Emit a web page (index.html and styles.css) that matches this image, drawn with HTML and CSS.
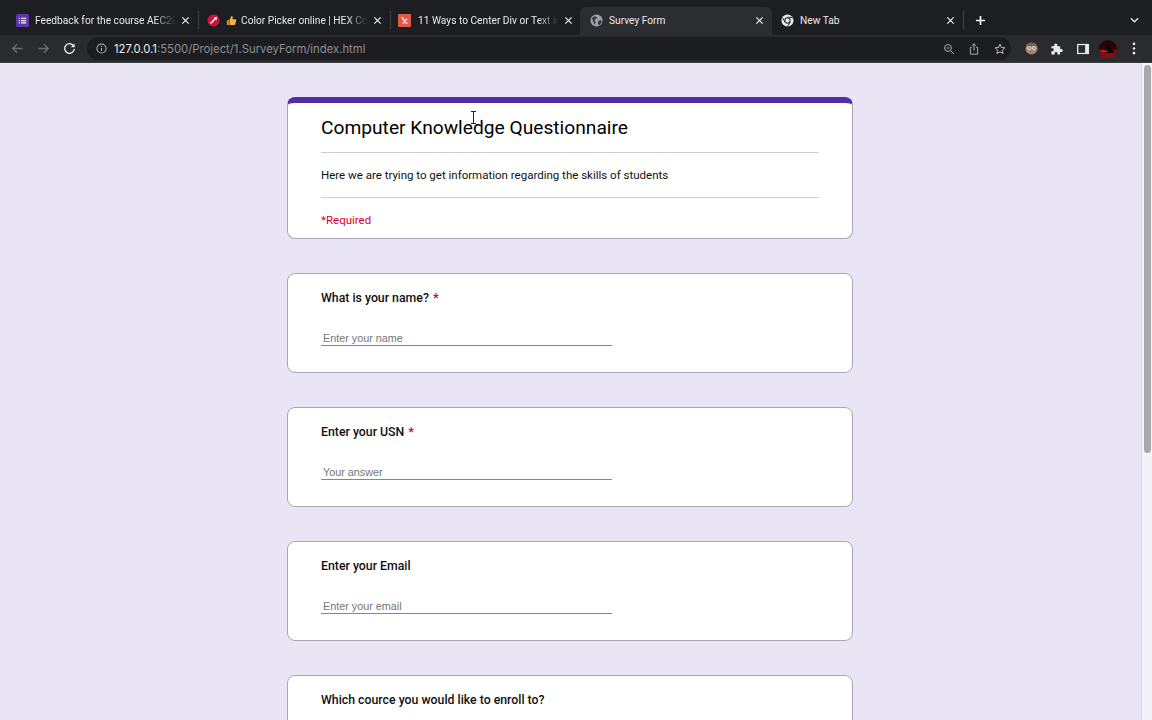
FILE: index.html
```html
<!DOCTYPE html>
<html lang="en">
<head>
    <meta charset="UTF-8">
    <meta name="viewport" content="width=device-width, initial-scale=1.0">
    <title>Survey Form</title>
    <link rel="stylesheet" href="styles.css">
</head>
<body>
    <header class="navegador">
        <div class="abas">
            <div class="aba aba-1">
                <svg class="favicon" viewBox="0 0 14 14"><rect width="14" height="14" rx="2" fill="#5b36ac"/><path d="M3 4h1.2v1.2H3zM3 6.500h1.2v1.2H3zM3 9h1.2v1.2H3z" fill="#fff"/><path d="M5.500 4H11v1.200H5.500zM5.500 6.500H11v1.200H5.500zM5.500 9H11v1.200H5.500z" fill="#fff"/></svg>
                <span class="aba-titulo">Feedback for the course AEC2022</span>
                <svg class="fechar" viewBox="0 0 10 10"><path d="M1.500 1.500l7 7M8.500 1.500l-7 7"/></svg>
            </div>
            <span class="divisor"></span>
            <div class="aba aba-2">
                <svg class="favicon" viewBox="0 0 14 14"><circle cx="7" cy="7" r="6.500" fill="#c9143c"/><path d="M3.800 10.200l5-5" stroke="#fff" stroke-width="1.500" fill="none"/><path d="M7.200 3.800l3 3 .8-3.800z" fill="#fff"/></svg>
                <svg class="emoji" viewBox="0 0 12 12"><path d="M1 5.500h2.200V11H1z" fill="#d9902a"/><path d="M3.800 5.500L6 1c1.200 0 1.600.9 1.300 2L7 4.600h3.200c.8 0 1.100.7.900 1.300l-1 4.300c-.1.5-.5.8-1 .8H3.800z" fill="#f2b73c"/></svg>
                <span class="aba-titulo">Color Picker online | HEX Color Picker</span>
                <svg class="fechar" viewBox="0 0 10 10"><path d="M1.500 1.500l7 7M8.500 1.500l-7 7"/></svg>
            </div>
            <span class="divisor"></span>
            <div class="aba aba-3">
                <svg class="favicon" viewBox="0 0 14 14"><rect width="14" height="14" rx="1" fill="#e4574a"/><path d="M4 3.500l3 3.500 3-1.500M7 7l-1.500 3.500M7.500 8.500l2.500 2" stroke="#fde9da" stroke-width="1.500" fill="none"/></svg>
                <span class="aba-titulo">11 Ways to Center Div or Text in Div</span>
                <svg class="fechar" viewBox="0 0 10 10"><path d="M1.500 1.500l7 7M8.500 1.500l-7 7"/></svg>
            </div>
            <div class="aba aba-ativa">
                <svg class="favicon" viewBox="0 0 14 14"><circle cx="7" cy="7" r="6.500" fill="#9aa0a6"/><path d="M2 4.500l3-2 2.500 1-1 2-2 .5 1.500 2.500-1 3zM9 7.500l3-1 .5 2.500-2.500 3-1.500-1.500z" fill="#35363a"/></svg>
                <span class="aba-titulo">Survey Form</span>
                <svg class="fechar" viewBox="0 0 10 10"><path d="M1.500 1.500l7 7M8.500 1.500l-7 7"/></svg>
            </div>
            <div class="aba aba-5">
                <svg class="favicon" viewBox="0 0 14 14"><circle cx="7" cy="7" r="6.500" fill="#e8eaed"/><circle cx="7" cy="7" r="3.400" fill="#202124"/><circle cx="7" cy="7" r="2.300" fill="#e8eaed"/><path d="M7 3.600h5.800M4.100 8.700L1.800 4M9.900 8.700L7 13.400" stroke="#202124" stroke-width="1"/></svg>
                <span class="aba-titulo">New Tab</span>
                <svg class="fechar" viewBox="0 0 10 10"><path d="M1.500 1.500l7 7M8.500 1.500l-7 7"/></svg>
            </div>
            <span class="divisor"></span>
            <svg class="nova-aba" viewBox="0 0 12 12"><path d="M6 1v10M1 6h10"/></svg>
            <svg class="lista-abas" viewBox="0 0 10 6"><path d="M1 1l4 4 4-4"/></svg>
        </div>
        <div class="barra">
            <svg class="btn-nav apagado" viewBox="0 0 14 14"><path d="M12.500 7H2M6.500 2.500L2 7l4.500 4.500"/></svg>
            <svg class="btn-nav apagado btn-avancar" viewBox="0 0 14 14"><path d="M1.500 7H12M7.500 2.500L12 7l-4.500 4.500"/></svg>
            <svg class="btn-nav btn-recarregar" viewBox="0 0 14 14"><path d="M11.600 4.500A5.200 5.200 0 1 0 12.200 7.500"/><path class="cheio" d="M12.600 1.500v4.200H8.400z"/></svg>
            <div class="endereco">
                <svg class="info" viewBox="0 0 12 12"><circle cx="6" cy="6" r="5"/><path d="M6 5.400v3.200M6 3.300v1"/></svg>
                <span class="url"><span class="url-host">127.0.0.1</span>:5500/Project/1.SurveyForm/index.html</span>
                <svg class="acao acao-zoom" viewBox="0 0 14 14"><circle cx="5.800" cy="5.800" r="4"/><path d="M8.800 8.800l4 4M4 5.800h3.600"/></svg>
                <svg class="acao acao-share" viewBox="0 0 14 14"><path d="M4.500 5H2.800v8h8.400V5H9.500M7 9V1M4.800 3L7 .9 9.200 3"/></svg>
                <svg class="acao acao-estrela" viewBox="0 0 14 14"><path d="M7 1.500l1.700 3.700 4 .4-3 2.700.9 4L7 10.300l-3.600 2 .9-4-3-2.700 4-.4z"/></svg>
            </div>
            <svg class="ext ext-coruja" viewBox="0 0 14 14"><circle cx="7" cy="7" r="6.500" fill="#a9836b"/><path d="M1.500 4.500a6 6 0 0 1 11 0z" fill="#75604f"/><circle cx="4.500" cy="6.500" r="2.300" fill="#c9d2d2"/><circle cx="9.500" cy="6.500" r="2.300" fill="#c9d2d2"/><circle cx="4.500" cy="6.500" r=".8" fill="#555"/><circle cx="9.500" cy="6.500" r=".8" fill="#555"/></svg>
            <svg class="ext ext-puzzle" viewBox="0 0 14 14"><path fill="#e8eaed" d="M1.500 4.500h3V3.200a1.700 1.700 0 0 1 3.400 0v1.300h3v3h1.200a1.700 1.700 0 0 1 0 3.400h-1.200V13.500H8V12.200a1.500 1.500 0 0 0-3 0v1.300H1.500V10h1a1.600 1.600 0 0 0 0-3.200h-1z"/></svg>
            <svg class="ext ext-painel" viewBox="0 0 14 14"><rect x=".8" y="1.800" width="12.400" height="10.400" fill="none" stroke="#e8eaed" stroke-width="1.500"/><rect x="9.500" y="1.800" width="3.700" height="10.400" fill="#e8eaed"/></svg>
            <svg class="ext ext-perfil" viewBox="0 0 18 18"><circle cx="9" cy="9" r="9" fill="#2a0508"/><path d="M0 10a9 9 0 0 0 18 0z" fill="#8d0a10"/><path d="M9.500 2.500L15.500 13H4z" fill="#0e0506"/><path d="M1 9.500l7 1 1 1.500-5 .5z" fill="#e3141d"/></svg>
            <svg class="ext-menu" viewBox="0 0 4 14"><circle cx="2" cy="2" r="1.400"/><circle cx="2" cy="7" r="1.400"/><circle cx="2" cy="12" r="1.400"/></svg>
        </div>
    </header>

    <div class="janela">
        <main class="pagina">
            <section class="cartao cartao-topo">
                <h1 class="titulo">Computer Knowledge Questionnaire</h1>
                <p class="descricao">Here we are trying to get information regarding the skills of students</p>
                <p class="obrigatorio">*Required</p>
            </section>

            <section class="cartao">
                <label class="pergunta" for="nome">What is your name? <span class="asterisco">*</span></label>
                <input class="resposta" id="nome" type="text" placeholder="Enter your name">
            </section>

            <section class="cartao">
                <label class="pergunta" for="usn">Enter your USN <span class="asterisco">*</span></label>
                <input class="resposta" id="usn" type="text" placeholder="Your answer">
            </section>

            <section class="cartao">
                <label class="pergunta" for="email">Enter your Email</label>
                <input class="resposta" id="email" type="text" placeholder="Enter your email">
            </section>

            <section class="cartao">
                <p class="pergunta">Which cource you would like to enroll to?</p>
            </section>

            <svg class="cursor" viewBox="0 0 7 13"><path d="M1 .5h5M1 12.500h5M3.500 .5v12"/></svg>
        </main>
        <div class="rolagem"><div class="rolagem-barra"></div></div>
    </div>
</body>
</html>
```

FILE: styles.css
```css
* {
    box-sizing: border-box;
}

html,
body {
    height: 100%;
}

body {
    margin: 0;
    display: flex;
    flex-direction: column;
    overflow: hidden;
    font-family: Roboto, sans-serif;
    background-color: #e9e5f5;
}

/* navegador */
.navegador {
    flex: none;
    background-color: #202124;
    border-bottom: 1px solid #3a3b3e;
}

.abas {
    display: flex;
    align-items: flex-end;
    height: 35px;
    padding-left: 8px;
    background-color: #1d1e21;
}

.aba {
    display: flex;
    align-items: center;
    height: 28px;
    padding: 0 6px 2px 8px;
    color: #e8eaed;
    font-family: Roboto, sans-serif;
    font-size: 10.2px;
    flex: none;
}

.aba-1 {
    width: 188px;
}

.aba-2 {
    width: 189px;
}

.aba-3 {
    width: 188px;
    padding-left: 7px;
}

.aba-3 .favicon {
    margin-right: 7px;
}

.aba-ativa {
    width: 192px;
    margin-left: 1px;
    padding-left: 10px;
    padding-right: 8px;
    background-color: #2c2d31;
    border-radius: 6px 6px 0 0;
}

.aba-5 {
    width: 189px;
    padding-left: 9px;
}

.favicon {
    flex: none;
    width: 13px;
    height: 13px;
    margin-right: 6px;
}

.emoji {
    flex: none;
    width: 11px;
    height: 11px;
    margin-right: 4px;
}

.aba-titulo {
    flex: 1;
    min-width: 0;
    overflow: hidden;
    white-space: nowrap;
    -webkit-mask-image: linear-gradient(to left, transparent 0, #000 22px);
    mask-image: linear-gradient(to left, transparent 0, #000 22px);
}

.aba-ativa .aba-titulo,
.aba-5 .aba-titulo {
    -webkit-mask-image: none;
    mask-image: none;
}

.fechar {
    flex: none;
    width: 9px;
    height: 9px;
    margin-left: 5px;
    fill: none;
    stroke: #e8eaed;
    stroke-width: 1.4;
}

.divisor {
    flex: none;
    width: 1px;
    height: 18px;
    margin-left: 2px;
    margin-bottom: 6px;
    background-color: #44464a;
}

.nova-aba {
    flex: none;
    width: 11px;
    height: 11px;
    margin: 0 0 9px 11px;
    fill: none;
    stroke: #f1f3f4;
    stroke-width: 1.8;
}

.lista-abas {
    flex: none;
    width: 9px;
    height: 6px;
    margin: 0 13px 12px auto;
    fill: none;
    stroke: #e8eaed;
    stroke-width: 1.4;
}

.barra {
    display: flex;
    align-items: center;
    height: 27px;
    padding: 0 14px 0 11px;
    background-color: #2a2b2f;
}

.btn-nav {
    flex: none;
    width: 13px;
    height: 13px;
    fill: none;
    stroke: #e8eaed;
    stroke-width: 1.5;
}

.btn-nav .cheio {
    fill: #e8eaed;
    stroke: none;
}

.apagado {
    stroke: #6a6c70;
}

.btn-avancar {
    margin-left: 13px;
}

.btn-recarregar {
    margin-left: 13px;
}

.endereco {
    display: flex;
    align-items: center;
    width: 924px;
    height: 23px;
    margin-left: 11px;
    padding: 0 5px 0 9px;
    border-radius: 12px;
    background-color: #1c1d20;
}

.info {
    flex: none;
    width: 11px;
    height: 11px;
    fill: none;
    stroke: #b4b6ba;
    stroke-width: 1.1;
}

.url {
    flex: 1;
    margin-left: 7px;
    color: #8e9094;
    font-family: Inter, sans-serif;
    font-size: 11.3px;
    white-space: nowrap;
}

.url-host {
    color: #e8eaed;
}

.acao {
    flex: none;
    width: 12px;
    height: 12px;
    fill: none;
    stroke: #b4b6ba;
    stroke-width: 1.1;
}

.acao-share {
    margin-left: 13px;
}

.acao-estrela {
    margin-left: 14px;
    stroke: #c8cacd;
}

.ext {
    flex: none;
    width: 13px;
    height: 13px;
}

.ext-coruja {
    margin-left: 14px;
}

.ext-puzzle {
    margin-left: 12px;
}

.ext-painel {
    margin-left: 14px;
    width: 12px;
    height: 12px;
}

.ext-perfil {
    margin-left: 10px;
    width: 18px;
    height: 18px;
}

.ext-menu {
    flex: none;
    width: 4px;
    height: 13px;
    margin-left: 15px;
    fill: #e8eaed;
}

/* pagina */
.janela {
    flex: 1;
    min-height: 0;
    display: flex;
}

.pagina {
    position: relative;
    flex: 1;
    min-width: 0;
    padding: 34px 1px 0 0;
    display: flex;
    flex-direction: column;
    align-items: center;
    gap: 34px;
    overflow: hidden;
}

.cartao {
    flex: none;
    width: 566px;
    min-height: 100px;
    padding: 15px 33px 0;
    background-color: #fff;
    border: 1px solid #a9a7b5;
    border-radius: 8px;
}

.cartao-topo {
    height: 142px;
    padding-top: 0;
    border-top: 6px solid #512da8;
}

.titulo {
    margin: 0;
    height: 50px;
    padding-top: 12px;
    border-bottom: 1px solid #cfcfd2;
    color: #000;
    font-size: 19.2px;
    font-weight: 400;
    line-height: 26px;
}

.descricao {
    margin: 0;
    height: 45px;
    padding-top: 13px;
    border-bottom: 1px solid #cfcfd2;
    color: #111;
    font-size: 11.5px;
    line-height: 18px;
}

.obrigatorio {
    margin: 0;
    padding-top: 13px;
    color: #d9002c;
    font-size: 11.5px;
    line-height: 18px;
}

.pergunta {
    display: block;
    margin: 0;
    color: #111;
    font-size: 12.3px;
    font-weight: 500;
    line-height: 18px;
}

.asterisco {
    color: #d9002c;
    font-size: 13px;
    margin-left: 1px;
}

.resposta {
    display: block;
    width: 291px;
    height: 18px;
    margin-top: 21px;
    padding: 2px 2px 0;
    border: none;
    border-bottom: 1px solid #85858a;
    outline: none;
    background: none;
    font-family: "Liberation Sans", sans-serif;
    font-size: 10.8px;
}

.resposta::placeholder {
    color: #757575;
    opacity: 1;
}

/* ponteiro sobre o titulo */
.cursor {
    position: absolute;
    left: 470px;
    top: 48px;
    width: 7px;
    height: 13px;
    fill: none;
    stroke: #222;
    stroke-width: 1;
}

.rolagem {
    flex: none;
    width: 11px;
    padding: 2px 1px 0 2px;
    background-color: #f4f2f9;
    border-left: 1px solid #dedce6;
}

.rolagem-barra {
    width: 7px;
    height: 388px;
    border-radius: 4px;
    background-color: #a9a9ad;
}
```
